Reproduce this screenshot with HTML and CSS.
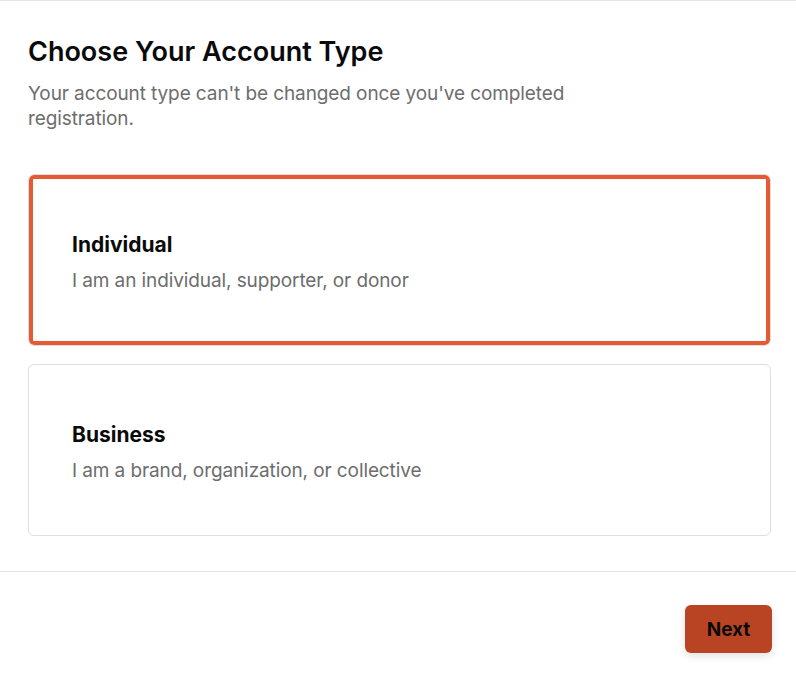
FILE: index.html
```html
<!DOCTYPE html>
<html lang="en">
<head>
<meta charset="utf-8">
<title>Choose Your Account Type</title>
<link rel="stylesheet" href="styles.css">
</head>
<body>
<div class="dialog">
  <div class="body">
    <h1 class="title">Choose Your Account Type</h1>
    <p class="subtitle">Your account type can't be changed once you've completed registration.</p>
    <div class="options">
      <div class="option option-selected">
        <div class="option-title">Individual</div>
        <div class="option-desc">I am an individual, supporter, or donor</div>
      </div>
      <div class="option">
        <div class="option-title">Business</div>
        <div class="option-desc">I am a brand, organization, or collective</div>
      </div>
    </div>
  </div>
  <div class="footer">
    <button class="btn-next" type="button">Next</button>
  </div>
</div>
</body>
</html>
```

FILE: styles.css
```css
* { box-sizing: border-box; }
html, body { margin: 0; padding: 0; background: #fff; }
body {
  font-family: Inter, "Noto Sans", "Liberation Sans", sans-serif;
  color: #0a0a0a;
  width: 796px;
  height: 676px;
  overflow: hidden;
}
.dialog {
  border-top: 1px solid #e4e4e4;
  height: 676px;
  display: flex;
  flex-direction: column;
}
.body {
  padding: 34px 25px 35px 28px;
}
.title {
  margin: 0;
  font-size: 27px;
  line-height: 34px;
  font-weight: 600;
}
.subtitle {
  margin: 12px 0 0;
  max-width: 580px;
  font-size: 19px;
  line-height: 25px;
  letter-spacing: -0.1px;
  color: #6d6d6d;
}
.options {
  margin-top: 43px;
  display: flex;
  flex-direction: column;
  gap: 18px;
}
.option {
  height: 172px;
  border: 1px solid #dedede;
  border-radius: 6px;
  padding: 57px 43px 0;
  display: flex;
  flex-direction: column;
  gap: 10px;
}
.option-selected {
  box-shadow: inset 0 0 0 4px #e65a33;
}
.option-title {
  font-size: 21px;
  line-height: 26px;
  font-weight: 700;
  color: #0a0a0a;
}
.option-desc {
  font-size: 19px;
  line-height: 25px;
  letter-spacing: -0.1px;
  color: #6d6d6d;
}
.footer {
  border-top: 1px solid #e4e4e4;
  padding: 33px 24px 0 0;
  display: flex;
  justify-content: flex-end;
}
.btn-next {
  width: 87px;
  height: 48px;
  border: none;
  border-radius: 6px;
  background: #b94424;
  color: #0a0a0a;
  font-family: Inter, "Noto Sans", "Liberation Sans", sans-serif;
  font-size: 19px;
  font-weight: 700;
  box-shadow: 0 3px 8px rgba(0,0,0,0.12);
  cursor: pointer;
}
```
